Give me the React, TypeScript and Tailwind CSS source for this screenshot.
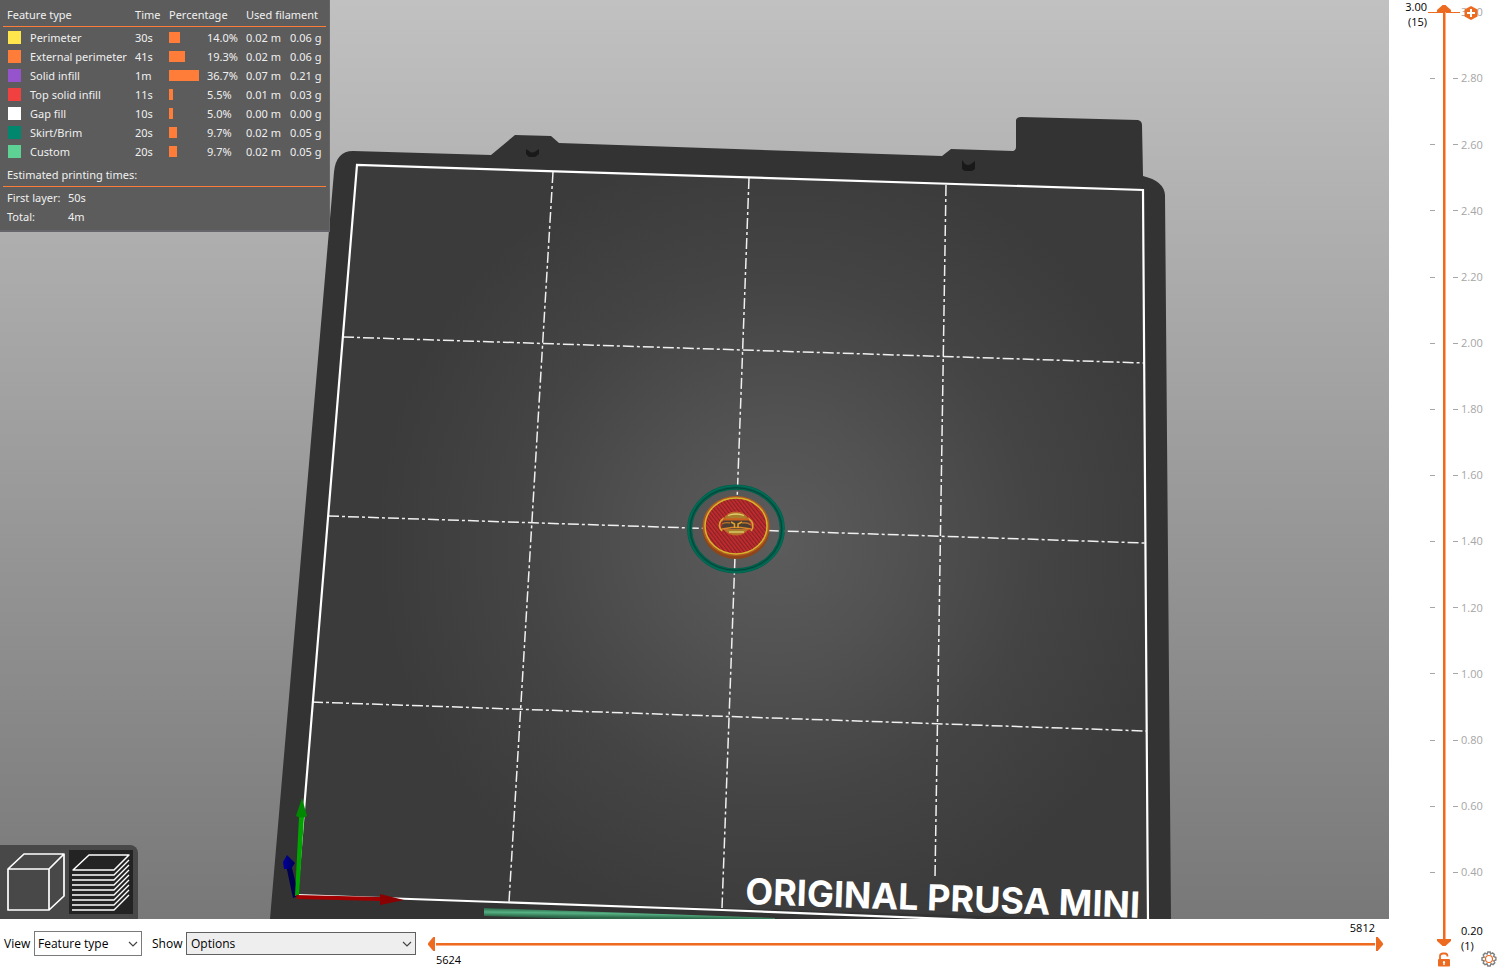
import React, { useState } from "react";

type Feature = {
  name: string;
  time: string;
  swatch: string;
  bar: string;
  percent: string;
  meters: string;
  grams: string;
};

const features: Feature[] = [
  { name: "Perimeter", time: "30s", swatch: "bg-[#ffe64d]", bar: "w-[11px]", percent: "14.0%", meters: "0.02 m", grams: "0.06 g" },
  { name: "External perimeter", time: "41s", swatch: "bg-[#ff7d38]", bar: "w-4", percent: "19.3%", meters: "0.02 m", grams: "0.06 g" },
  { name: "Solid infill", time: "1m", swatch: "bg-[#9654cc]", bar: "w-[30px]", percent: "36.7%", meters: "0.07 m", grams: "0.21 g" },
  { name: "Top solid infill", time: "11s", swatch: "bg-[#f04040]", bar: "w-1", percent: "5.5%", meters: "0.01 m", grams: "0.03 g" },
  { name: "Gap fill", time: "10s", swatch: "bg-white", bar: "w-1", percent: "5.0%", meters: "0.00 m", grams: "0.00 g" },
  { name: "Skirt/Brim", time: "20s", swatch: "bg-[#00876e]", bar: "w-2", percent: "9.7%", meters: "0.02 m", grams: "0.05 g" },
  { name: "Custom", time: "20s", swatch: "bg-[#5ed194]", bar: "w-2", percent: "9.7%", meters: "0.02 m", grams: "0.05 g" },
];

const layerMarks = [
  "3.00", "2.80", "2.60", "2.40", "2.20", "2.00", "1.80", "1.60",
  "1.40", "1.20", "1.00", "0.80", "0.60", "0.40", "0.20",
];

function Legend() {
  return (
    <section
      aria-label="Legend"
      className="absolute left-0 top-0 w-[330px] border-b-2 border-r border-[#65656b] bg-[#5c5c5c] px-[3px] pb-1 pt-[5px] font-['Noto_Sans',sans-serif] text-[11px] leading-[19px] text-[#f0f0f0]"
    >
      <table className="w-full table-fixed border-collapse text-left">
        <colgroup>
          <col className="w-[27px]" />
          <col className="w-[105px]" />
          <col className="w-[34px]" />
          <col className="w-[38px]" />
          <col className="w-[39px]" />
          <col className="w-[44px]" />
          <col />
        </colgroup>
        <thead>
          <tr className="h-[21px] border-b border-[#ff7d38] align-top">
            <th colSpan={2} className="pl-1 font-normal">Feature type</th>
            <th className="font-normal">Time</th>
            <th colSpan={2} className="font-normal">Percentage</th>
            <th colSpan={2} className="font-normal">Used filament</th>
          </tr>
        </thead>
        <tbody className="before:block before:h-px">
          {features.map((f) => (
            <tr key={f.name} className="h-[19px] whitespace-nowrap">
              <td className="pl-[5px]"><span className={`block size-[13px] ${f.swatch}`} /></td>
              <td>{f.name}</td>
              <td>{f.time}</td>
              <td><span className={`block h-[11px] bg-[#ff7d38] ${f.bar}`} /></td>
              <td>{f.percent}</td>
              <td>{f.meters}</td>
              <td>{f.grams}</td>
            </tr>
          ))}
        </tbody>
      </table>
      <h2 className="mt-1 border-b border-[#ff7d38] pb-[2px] pl-1">Estimated printing times:</h2>
      <dl className="grid grid-cols-[61px_1fr] pl-1 pt-px">
        <dt>First layer:</dt>
        <dd>50s</dd>
        <dt>Total:</dt>
        <dd>4m</dd>
      </dl>
    </section>
  );
}

function Scene() {
  return (
    <svg
      className="absolute inset-0 size-full"
      viewBox="0 0 1389 919"
      preserveAspectRatio="xMidYMid slice"
      role="img"
      aria-label="Print bed preview"
    >
      <defs>
        <linearGradient id="backdrop" x1="0" y1="0" x2="0" y2="1">
          <stop offset="0" stopColor="#c1c1c1" />
          <stop offset="1" stopColor="#787878" />
        </linearGradient>
        <radialGradient id="sheet" gradientUnits="userSpaceOnUse" cx="775" cy="540" r="400">
          <stop offset="0" stopColor="#5c5c5c" />
          <stop offset="0.3" stopColor="#525252" />
          <stop offset="0.65" stopColor="#444444" />
          <stop offset="1" stopColor="#3b3b3b" />
        </radialGradient>
        <linearGradient id="purge" gradientUnits="userSpaceOnUse" x1="484" y1="908" x2="483.900" y2="916">
          <stop offset="0" stopColor="#2c6749" />
          <stop offset="0.5" stopColor="#56b183" />
          <stop offset="1" stopColor="#2c6749" />
        </linearGradient>
        <linearGradient id="blueCone" x1="0" y1="0" x2="1" y2="0">
          <stop offset="0" stopColor="#0000a0" />
          <stop offset="1" stopColor="#000050" />
        </linearGradient>
        <pattern id="infill" width="3" height="3" patternUnits="userSpaceOnUse" patternTransform="rotate(-38)">
          <rect width="3" height="3" fill="#c72b2f" />
          <rect width="1.3" height="3" fill="#842324" />
        </pattern>
      </defs>
      <rect width="1389" height="919" fill="url(#backdrop)" />
      <path
        d="M270 919L334 172Q336 151 353 151L491 155L515 135L551 136L559 143L942 156L951 149L1013 151Q1016 150 1016 147V120Q1017 117 1021 117L1138 120Q1142 121 1142 125L1143 176Q1164 181 1165 195L1171 919Z"
        fill="#333333"
      />
      <path d="M357 165L1143 190L1148 921L297 895Z" fill="url(#sheet)" />
      <path d="M526 149l3 2q3 3 7 0l3-2v5l-4 3h-6l-3-3zM962 160l3 4q3 2 6 0l4-3v8l-3 2h-7l-3-2z" fill="#191919" />
      <g stroke="#f0f0f0" strokeWidth="1.5" strokeDasharray="11 3 3 3" fill="none">
        <path d="M553 172L509 902M749 178L722 908M946 185L935 878" />
        <path d="M343 337L1144 363M328 516L1145 543M312 702L1146 731" />
      </g>
      <path d="M484 908L775 918V924L484 916Z" fill="url(#purge)" />
      <path d="M297 895L357 165L1143 190L1148 922" fill="none" stroke="#fff" strokeWidth="2.2" />
      <path d="M297 895L722 910L1000 921" fill="none" stroke="#fff" strokeWidth="2.2" />
      <text
        x="745"
        y="904"
        transform="rotate(2 745 904)"
        fill="#fff"
        fontFamily="Inter, sans-serif"
        fontWeight="700"
        fontSize="36"
      >
        ORIGINAL PRUSA MINI
      </text>

      <ellipse cx="736" cy="529" rx="46.3" ry="41.8" fill="none" stroke="#00604c" strokeWidth="5.2" />
      <ellipse cx="736" cy="529" rx="45.8" ry="41.3" fill="none" stroke="#003f33" strokeWidth="0.9" />
      <ellipse cx="736" cy="529" rx="47.8" ry="43.3" fill="none" stroke="#00735c" strokeWidth="0.8" />
      <ellipse cx="736" cy="529" rx="33.5" ry="30" fill="#8d4519" />
      <ellipse cx="736" cy="526" rx="33.5" ry="30" fill="#b3591f" />
      <ellipse cx="736" cy="526" rx="31" ry="28" fill="url(#infill)" stroke="#d3b52d" strokeWidth="1.5" />
      <g fill="none">
        <path d="M724 519Q728 512 736 512T748 519Z" fill="#a8802b" stroke="#c4652a" strokeWidth="1.2" />
        <path d="M728 515.5Q736 512.5 744 515.5" stroke="#e0cf6e" strokeWidth="1.3" />
        <path d="M724 529Q729 535 736 535T748 529Z" fill="#a8802b" stroke="#c4652a" strokeWidth="1.2" />
        <path d="M729 532H744" stroke="#e0cf6e" strokeWidth="1.3" />
        <path d="M723 520H749L751 529H722Z" fill="#4c3d33" />
        <path d="M724 518Q716 524 722 531M748 518Q756 524 751 531" stroke="#d6a331" strokeWidth="1.6" />
        <path d="M723 519.5H749" stroke="#c9601f" strokeWidth="2" />
        <path d="M722 529L732 527.5H741L751 529" stroke="#d9862b" strokeWidth="1.5" />
        <path d="M731 522L734.5 524V528M742 522L738 524V528" stroke="#e2a42d" strokeWidth="1.5" />
        <path d="M722 524Q726 522 730 523M742 523Q747 522 751 525" stroke="#b3722a" strokeWidth="1.3" />
      </g>

      <g>
        <path d="M293 898L286 865L291 864L299 896Z" fill="#00004e" />
        <path d="M287 855L295 863L291 869H284L283 862Z" fill="url(#blueCone)" />
        <path d="M295 896L299 817H304L299 895Z" fill="#00a300" />
        <path d="M302 798L307 816Q302 819 296 816Z" fill="#008900" />
        <path d="M296 895L381 897V901L297 899Z" fill="#a00000" />
        <path d="M380 894L404 900L380 905Z" fill="#8a0000" />
      </g>
    </svg>
  );
}

const layerOffsets = [5, 10, 15, 20, 25, 30, 35, 40];

function ViewToggle() {
  return (
    <div className="absolute bottom-0 left-0 flex items-end rounded-tr-lg bg-[#484848] p-[5px]">
      <button type="button" aria-label="3D editor view" className="size-16">
        <svg viewBox="0 0 64 64" className="size-16" fill="none" stroke="#fff" strokeWidth="1.7" strokeLinejoin="round">
          <path d="M3 19H44V60H3ZM3 19L19 4H59L44 19M59 4V46L44 60" />
        </svg>
      </button>
      <button type="button" aria-label="Preview" className="size-16 bg-[#232323]">
        <svg viewBox="0 0 64 64" className="size-16" fill="none" stroke="#fff" strokeLinejoin="round">
          <path d="M4 20L20 5H60L45 20Z" strokeWidth="1.5" />
          {layerOffsets.map((o) => (
            <path key={o} d={`M3 ${20 + o}H45L60 ${5 + o}`} strokeWidth="1.4" />
          ))}
        </svg>
      </button>
    </div>
  );
}

function Chevron() {
  return (
    <svg viewBox="0 0 10 6" className="pointer-events-none absolute right-1 top-1/2 w-[10px] -translate-y-1/2" fill="none" stroke="#444" strokeWidth="1.2">
      <path d="M1 1L5 5L9 1" />
    </svg>
  );
}

const rangeBase =
  "pointer-events-none absolute inset-0 m-0 size-full appearance-none bg-transparent [&::-webkit-slider-runnable-track]:bg-transparent [&::-webkit-slider-thumb]:pointer-events-auto [&::-webkit-slider-thumb]:appearance-none [&::-webkit-slider-thumb]:bg-[#ed6b21]";

function MoveSlider() {
  const [range, setRange] = useState({ low: 5624, high: 5812 });
  return (
    <div className="flex min-w-0 flex-1 flex-col pl-3 pr-[6px]">
      <output className="pr-2 text-right text-[11px] leading-[18px]">{range.high}</output>
      <div className="relative h-[14px]">
        <div className="mx-2 mt-[6px] h-[3px] border-b border-[#ffad80] bg-[#ed6b21]" />
        <input
          type="range" min={5624} max={5812} value={range.low} aria-label="First move"
          onChange={(e) => setRange({ ...range, low: Math.min(+e.target.value, range.high) })}
          className={`${rangeBase} [&::-webkit-slider-thumb]:h-[14px] [&::-webkit-slider-thumb]:w-[7px] [&::-webkit-slider-thumb]:[clip-path:polygon(0_45%,75%_0,100%_0,100%_100%,75%_100%,0_55%)]`}
        />
        <input
          type="range" min={5624} max={5812} value={range.high} aria-label="Last move"
          onChange={(e) => setRange({ ...range, high: Math.max(+e.target.value, range.low) })}
          className={`${rangeBase} [&::-webkit-slider-thumb]:h-[14px] [&::-webkit-slider-thumb]:w-[7px] [&::-webkit-slider-thumb]:[clip-path:polygon(100%_45%,25%_0,0_0,0_100%,25%_100%,100%_55%)]`}
        />
      </div>
      <output className="pl-2 text-[11px] leading-[17px]">{range.low}</output>
    </div>
  );
}

function LayerSlider() {
  const [range, setRange] = useState({ low: 1, high: 15 });
  const height = (layer: number) => (layer * 0.2).toFixed(2);
  return (
    <aside className="flex w-[110px] shrink-0 flex-col pb-px pt-[5px] text-[11px]">
      <div className="relative grid min-h-0 flex-1 grid-cols-[50px_10px_1fr]">
        <output className="-mt-[6px] w-[38px] text-right leading-[15px]">
          {height(range.high)}
          <br />({range.high})
        </output>
        <div className="relative">
          <div className="mx-auto h-full w-[3px] border-r border-[#ffad80] bg-[#ed6b21]" />
          <input
            type="range" min={1} max={15} value={range.low} aria-label="Lowest layer"
            onChange={(e) => setRange({ ...range, low: Math.min(+e.target.value, range.high) })}
            className={`${rangeBase} [direction:rtl] [writing-mode:vertical-lr] [&::-webkit-slider-thumb]:h-[7px] [&::-webkit-slider-thumb]:w-[14px] [&::-webkit-slider-thumb]:[clip-path:polygon(0_0,100%_0,100%_30%,60%_100%,40%_100%,0_30%)]`}
          />
          <input
            type="range" min={1} max={15} value={range.high} aria-label="Highest layer"
            onChange={(e) => setRange({ ...range, high: Math.max(+e.target.value, range.low) })}
            className={`${rangeBase} [direction:rtl] [writing-mode:vertical-lr] [&::-webkit-slider-thumb]:h-[7px] [&::-webkit-slider-thumb]:w-[14px] [&::-webkit-slider-thumb]:[clip-path:polygon(0_100%,100%_100%,100%_70%,60%_0,40%_0,0_70%)]`}
          />
        </div>
        <ol className="-ml-[19px] flex flex-col justify-between pb-[7px] pt-[7px] text-[#a6a6a6]">
          {layerMarks.map((mark, i) => (
            <li key={mark} className="flex h-px items-center">
              {i === 0 && (
                <>
                  <span className="-ml-[2px] h-px w-8 bg-[#ed6b21]" />
                  <span className="ml-px">{mark}</span>
                </>
              )}
              {i > 0 && i < 14 && (
                <>
                  <span className="h-px w-[5px] bg-[#a6a6a6]" />
                  <span className="ml-[18px] h-px w-[5px] bg-[#a6a6a6]" />
                  <span className="ml-[3px]">{mark}</span>
                </>
              )}
            </li>
          ))}
        </ol>
        <button type="button" aria-label="Add color change" className="absolute left-[75px] top-px size-[14px]">
          <svg viewBox="0 0 14 14" className="size-[14px]">
            <path d="M7 0L13.5 3.5V10.5L7 14L.5 10.5V3.5Z" fill="#ed6b21" />
            <path d="M7 3V11M3 7H11" stroke="#fff" strokeWidth="2" />
          </svg>
        </button>
        <output className="absolute bottom-[-7px] left-[72px] leading-[15px] text-black">
          {height(range.low)}
          <br />({range.low})
        </output>
      </div>
      <div className="flex h-[21px] items-end justify-between pl-[48px] pr-[2px]">
        <button type="button" aria-label="Unlock one layer">
          <svg viewBox="0 0 14 15" className="h-[15px] w-[14px]">
            <path d="M3 7V4Q3 1.5 6 1.5H8Q10.5 1.5 10.5 4.5" fill="none" stroke="#ed6b21" strokeWidth="1.8" />
            <rect x="1" y="7" width="12" height="7.5" rx="1" fill="#ed6b21" />
            <path d="M7 9a1.3 1.3 0 0 1 .7 2.3V13H6.3V11.3A1.3 1.3 0 0 1 7 9Z" fill="#fff" />
          </svg>
        </button>
        <button type="button" aria-label="Slider settings">
          <svg viewBox="0 0 16 16" className="size-4" fill="none">
            <path d="M6.8 1H9.2L9.6 3L11.6 1.9L13.4 3.5L12.6 5.5L14.9 6.5V9L12.8 9.8L13.8 11.8L12 13.6L10 12.7L9.2 15H6.8L6 12.8L4 13.7L2.2 12L3.2 10L1 9.2V6.8L3.2 6L2.2 4L4 2.2L6.1 3.1Z" stroke="#808080" strokeWidth="1.4" />
            <circle cx="8" cy="8" r="3.5" stroke="#ed6b21" strokeWidth="1.2" />
          </svg>
        </button>
      </div>
    </aside>
  );
}

export default function App() {
  return (
    <div className="flex h-screen overflow-hidden bg-white font-['Open_Sans','Noto_Sans',sans-serif] text-[12px] text-black">
      <div className="flex min-w-0 flex-1 flex-col">
        <main className="relative min-h-0 flex-1 overflow-hidden">
          <Scene />
          <Legend />
          <ViewToggle />
        </main>
        <footer className="flex h-[49px] shrink-0 items-center pl-1">
          <label htmlFor="view" className="w-[30px]">View</label>
          <div className="relative">
            <select id="view" className="h-[25px] w-[108px] appearance-none border border-[#7a7a7a] bg-white pl-[3px]">
              <option>Feature type</option>
            </select>
            <Chevron />
          </div>
          <label htmlFor="show" className="ml-[10px] w-[34px]">Show</label>
          <div className="relative">
            <select id="show" className="h-[23px] w-[230px] appearance-none border border-[#606060] bg-[#eeeeee] pl-1">
              <option>Options</option>
            </select>
            <Chevron />
          </div>
          <MoveSlider />
        </footer>
      </div>
      <LayerSlider />
    </div>
  );
}
